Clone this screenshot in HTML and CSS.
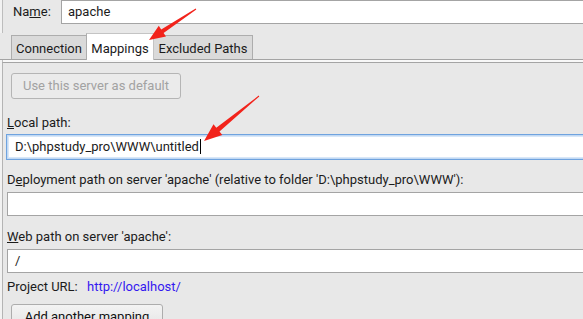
FILE: index.html
```html
<!DOCTYPE html>
<html>
<head>
<meta charset="utf-8">
<link rel="stylesheet" href="styles.css">
</head>
<body>
<div class="page">
  <div class="top">
    <span class="name-label">Na<u>m</u>e:</span>
    <div class="field name-field">apache</div>
  </div>
  <div class="tabs">
    <div class="tab tab-conn">Connection</div>
    <div class="tab tab-map active">Mappings</div>
    <div class="tab tab-excl">Excluded Paths</div>
  </div>
  <div class="strip"></div>
  <div class="panel">
    <button class="btn btn-default" disabled>Use this server as default</button>

    <div class="label label-local"><u>L</u>ocal path:</div>
    <div class="field focused">D:\phpstudy_pro\WWW\untitled<span class="caret"></span></div>

    <div class="label">D<u>e</u>ployment path on server 'apache' (relative to folder 'D:\phpstudy_pro\WWW'):</div>
    <div class="field"></div>

    <div class="label"><u>W</u>eb path on server 'apache':</div>
    <div class="field">/</div>

    <div class="url-row">
      <span class="url-label">Project URL:</span>
      <span class="url-link">http://localhost/</span>
    </div>

    <button class="btn btn-add">Add another mapping</button>
  </div>

  <svg class="annot" width="583" height="319" viewBox="0 0 583 319">
    <polygon points="195.7,8.6 161.2,29.4 158.8,25.8 149,40 166,36.6 163.6,33 196.3,9.4" fill="#f2231b"/>
    <polygon points="258.7,95.6 216.3,127.7 213.5,124.2 204,141 222.3,135 219.5,131.5 259.3,96.4" fill="#f2231b"/>
  </svg>
</div>
</body>
</html>
```
FILE: styles.css
```css
* { box-sizing: border-box; }

html, body {
  margin: 0;
  padding: 0;
  width: 583px;
  height: 319px;
  overflow: hidden;
  background: #f2f2f2;
  font-family: Roboto, "Liberation Sans", Arial, sans-serif;
  font-size: 13px;
  color: #1b1b1b;
}

.page {
  position: relative;
  width: 583px;
  height: 319px;
  overflow: hidden;
}

u { text-decoration: underline; text-underline-offset: 1px; }

/* top row */
.top {
  display: flex;
  align-items: flex-start;
  height: 33px;
  margin-left: 2px;
  border-left: 1px solid #bdbdbd;
  background: #e8e8e8;
}

.name-label {
  flex: none;
  width: 58px;
  padding-left: 10px;
  line-height: 24px;
}

.field {
  flex: none;
  height: 24px;
  line-height: 22px;
  background: #fff;
  border: 1px solid #a4a4a4;
  padding: 0 6px;
  white-space: nowrap;
  width: 600px;
}

.name-field {
  width: 540px;
  padding-left: 6px;
}

/* tabs */
.tabs {
  display: flex;
  align-items: flex-end;
  height: 27px;
  padding-left: 11px;
  background: #e8e8e8;
  border-bottom: 1px solid #a4a4a4;
}

.tab {
  flex: none;
  height: 24px;
  display: flex;
  align-items: flex-end;
  justify-content: center;
  padding-bottom: 3px;
  line-height: 15px;
  background: #dadada;
  border: 1px solid #adadad;
  border-bottom: none;
  white-space: nowrap;
}

.tab-conn { width: 76px; }
.tab-map { width: 68px; margin-left: -1px; }
.tab-excl { width: 100px; margin-left: -1px; }

.tab.active {
  position: relative;
  height: 27px;
  margin-bottom: -1px;
  padding-bottom: 4px;
  background: #fff;
  border-color: #c4c4c4;
  border-left-color: #adadad;
}

.strip {
  height: 2px;
  margin-left: 2px;
  background: #f8f8f8;
  border-left: 1px solid #bdbdbd;
}

/* panel */
.panel {
  margin-left: 2px;
  border-left: 1px solid #b4b4b4;
  border-top: 1px solid #a4a4a4;
  background: #e8e8e8;
  padding-left: 4px;
  padding-bottom: 20px;
  display: flex;
  flex-direction: column;
  align-items: flex-start;
}

.panel > * { flex: none; }

.btn {
  font-family: inherit;
  font-size: 13px;
  height: 26px;
  border: 1px solid #adadad;
  border-radius: 3px;
  margin-left: 4px;
  padding: 0;
  line-height: 22px;
}

.btn-default {
  margin-top: 10px;
  width: 170px;
  background: #ebebeb;
  color: #a2a2a2;
  border-color: #b5b5b5;
}

.label {
  line-height: 15px;
  margin-top: 13px;
  margin-bottom: 5px;
  white-space: nowrap;
}

.label-local { margin-top: 16px; }

.panel .field {
  width: 600px;
  padding-left: 7px;
}

.field.focused {
  border-color: #c2d9f3;
  box-shadow: 0 0 0 1px #6fa3df, inset 0 0 0 1px #d8e7f8;
}

.caret {
  display: inline-block;
  width: 1px;
  height: 15px;
  background: #000;
  vertical-align: -3px;
  margin-left: 1px;
}

.url-row {
  margin-top: 6px;
  line-height: 15px;
  display: flex;
}

.url-label { width: 80px; }

.url-link { color: #3418f0; }

.btn-add {
  margin-top: 10px;
  width: 152px;
  background: linear-gradient(#f3f3f3, #e4e4e4);
  color: #111;
}

.annot {
  position: absolute;
  left: 0;
  top: 0;
  pointer-events: none;
}
```
